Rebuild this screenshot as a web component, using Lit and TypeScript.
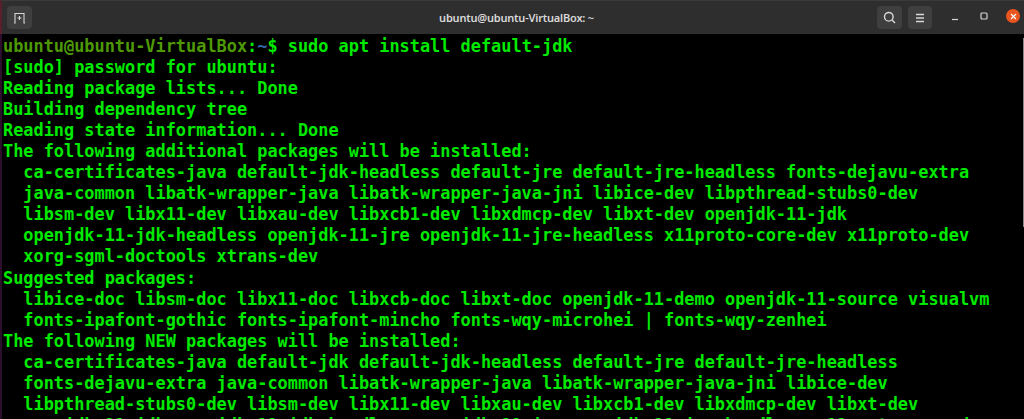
import { LitElement, html, css } from "lit";
import { customElement } from "lit/decorators.js";

const LINES = [
  "[sudo] password for ubuntu:",
  "Reading package lists... Done",
  "Building dependency tree",
  "Reading state information... Done",
  "The following additional packages will be installed:",
  "  ca-certificates-java default-jdk-headless default-jre default-jre-headless fonts-dejavu-extra",
  "  java-common libatk-wrapper-java libatk-wrapper-java-jni libice-dev libpthread-stubs0-dev",
  "  libsm-dev libx11-dev libxau-dev libxcb1-dev libxdmcp-dev libxt-dev openjdk-11-jdk",
  "  openjdk-11-jdk-headless openjdk-11-jre openjdk-11-jre-headless x11proto-core-dev x11proto-dev",
  "  xorg-sgml-doctools xtrans-dev",
  "Suggested packages:",
  "  libice-doc libsm-doc libx11-doc libxcb-doc libxt-doc openjdk-11-demo openjdk-11-source visualvm",
  "  fonts-ipafont-gothic fonts-ipafont-mincho fonts-wqy-microhei | fonts-wqy-zenhei",
  "The following NEW packages will be installed:",
  "  ca-certificates-java default-jdk default-jdk-headless default-jre default-jre-headless",
  "  fonts-dejavu-extra java-common libatk-wrapper-java libatk-wrapper-java-jni libice-dev",
  "  libpthread-stubs0-dev libsm-dev libx11-dev libxau-dev libxcb1-dev libxdmcp-dev libxt-dev",
  "  openjdk-11-jdk openjdk-11-jdk-headless openjdk-11-jre openjdk-11-jre-headless x11proto-core-dev",
];

@customElement("app-root")
export class AppRoot extends LitElement {
  static styles = css`
    :host { display: block; width: 1024px; height: 419px; overflow: hidden; background: #000; }
    .bar {
      height: 34px; background: #2e2e2e; border-top: 1px solid #3a3a3a;
      display: flex; align-items: center; padding: 0 4px 0 5px; box-sizing: border-box;
      border-left: 2px solid #5a1f2c;
    }
    .btn { width: 25px; height: 23px; border-radius: 4px; background: #3f3f3f; display: flex; align-items: center; justify-content: center; flex: none; }
    .menu { margin-left: 6px; width: 24px; }
    .title { flex: 1; padding-left: 124px; text-align: center; color: #d8d8d8; font: 600 11px "Noto Sans", sans-serif; letter-spacing: -0.2px; }
    .wbtn { width: 24px; height: 24px; display: flex; align-items: center; justify-content: center; flex: none; }
    .min { margin-left: 11px; }
    .max { margin-left: 5px; margin-top: -3px; }
    .close { width: 14px; height: 14px; margin-left: 10px; margin-top: -3px; border-radius: 50%; background: #e9541f; display: flex; align-items: center; justify-content: center; flex: none; }
    .term {
      position: relative;
      height: 385px; overflow: hidden; background: #000; padding: 2px 0 0 1px; box-sizing: border-box;
      border-left: 2px solid #2c0f2c; color: #00ea00;
      font: bold 16.9px/21.05px "DejaVu Sans Mono", monospace; white-space: pre;
    }
    .term::after {
      content: ""; position: absolute; top: 4px; right: 0; width: 1px; height: 189px; background: #8a8a8a;
    }
    .user { color: #4e9a06; }
    .path { color: #3465a4; }
    svg { display: block; }
  `;

  render() {
    return html`
      <div class="bar">
        <div class="btn">
          <svg width="13" height="13" viewBox="0 0 13 13" fill="none" stroke="#d5d5d5" stroke-width="1.1">
            <path d="M1 12h1V2.5h9V12h1M4.5 7h4M6.5 5v4" />
          </svg>
        </div>
        <div class="title">ubuntu@ubuntu-VirtualBox: ~</div>
        <div class="btn">
          <svg width="13" height="13" viewBox="0 0 13 13" fill="none" stroke="#d8d8d8" stroke-width="1.4">
            <circle cx="5.8" cy="5.8" r="4.3" /><path d="M9 9l3 3" />
          </svg>
        </div>
        <div class="btn menu">
          <svg width="12" height="12" viewBox="0 0 12 12" fill="none" stroke="#d8d8d8" stroke-width="1.5">
            <path d="M2 2.5h8M2 6h8M2 9.5h8" />
          </svg>
        </div>
        <div class="wbtn min">
          <svg width="10" height="10" viewBox="0 0 10 10" stroke="#d5d5d5" stroke-width="1.2"><path d="M2 6.5h6" /></svg>
        </div>
        <div class="wbtn max">
          <svg width="10" height="10" viewBox="0 0 10 10" fill="none" stroke="#d5d5d5" stroke-width="1.2"><rect x="2" y="2" width="6" height="6" rx="1" /></svg>
        </div>
        <div class="close">
          <svg width="7" height="7" viewBox="0 0 7 7" stroke="#fff" stroke-width="1.2"><path d="M1 1l5 5M6 1l-5 5" /></svg>
        </div>
      </div>
      <div class="term"><span class="user">ubuntu@ubuntu-VirtualBox</span>:<span class="path">~</span>$ sudo apt install default-jdk
${LINES.join("\n")}</div>
    `;
  }
}
